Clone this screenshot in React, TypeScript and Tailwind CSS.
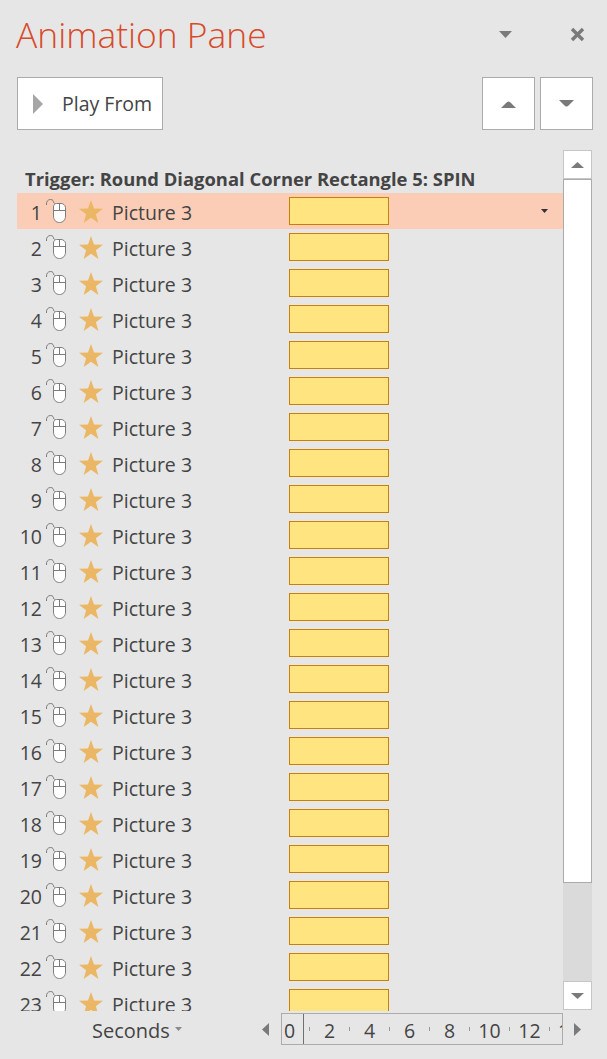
import React from 'react';

const FONT = '"Open Sans", "Noto Sans", sans-serif';

const rows = Array.from({ length: 23 }, (_, i) => i + 1);
const ticks = [2, 4, 6, 8, 10, 12];

const Tri: React.FC<{ d: string; w: number; h: number; vb: string; fill?: string }> = ({ d, w, h, vb, fill = '#7a7a7a' }) => (
  <svg width={w} height={h} viewBox={vb} className="block shrink-0">
    <path d={d} fill={fill} />
  </svg>
);

const MouseIcon: React.FC = () => (
  <svg width="22" height="24" viewBox="0 0 22 24" className="block shrink-0">
    <path d="M1.5 6 C1 2.5 3 0.5 5.5 0.5 C8 0.5 8.5 2 8.5 3.5 C9 4 10 4.5 10.5 5" fill="none" stroke="#7c7c7c" strokeWidth="1" />
    <path d="M8.5 8 C8.5 6 10 4.5 11.5 4.5 L16 4.5 C18 4.5 20.5 6 20.5 8.5 L20.5 17 C20.5 21 18 23.5 14.5 23.5 C11 23.5 8.5 21 8.5 17 Z" fill="#ffffff" stroke="#7c7c7c" strokeWidth="1" />
    <path d="M8.5 11.5 L20.5 11.5 M14.5 4.5 L14.5 11.5" fill="none" stroke="#7c7c7c" strokeWidth="1" />
  </svg>
);

const Star: React.FC = () => (
  <svg width="24" height="23" viewBox="0 0 24 23" className="block shrink-0">
    <path d="M12 0 L15 8.4 L24 8.7 L16.9 14.2 L19.4 23 L12 17.8 L4.6 23 L7.1 14.2 L0 8.7 L9 8.4 Z" fill="#ecb764" />
  </svg>
);

const Row: React.FC<{ n: number; selected: boolean }> = ({ n, selected }) => (
  <div className={`flex h-[36px] shrink-0 items-center ${selected ? 'bg-[#fccdb6]' : ''}`}>
    <span className="mt-[4px] w-[25px] shrink-0 text-right text-[19.5px] leading-none text-[#444444]">{n}</span>
    <div className="ml-[3px] -mt-[1px]">
      <MouseIcon />
    </div>
    <div className="ml-[12px]">
      <Star />
    </div>
    <span className="ml-[9px] mt-[4px] w-[177px] shrink-0 text-[19.5px] leading-none text-[#444444]">Picture 3</span>
    <div className="h-[28px] w-[100px] shrink-0 border border-[#cc8000] bg-[#ffe47f]" />
    {selected && (
      <div className="ml-[152px]">
        <Tri d="M0 0 H7 L3.5 4 Z" w={7} h={4} vb="0 0 7 4" fill="#333333" />
      </div>
    )}
  </div>
);

export default function App() {
  return (
    <div className="flex h-[1059px] w-[607px] flex-col overflow-hidden bg-[#e6e6e6]" style={{ fontFamily: FONT }}>
      {/* title */}
      <div className="mb-[8px] flex h-[69px] shrink-0 items-center pl-[16px] pr-[22px]">
        <h1 className="mt-[1px] flex-1 text-[35.4px] font-light leading-none text-[#d84a2a]">Animation Pane</h1>
        <Tri d="M0 0 H13 L6.5 7 Z" w={13} h={7} vb="0 0 13 7" />
        <svg width="15" height="15" viewBox="0 0 15 15" className="ml-[58px] block">
          <path d="M2 2 L13 13 M13 2 L2 13" stroke="#7a7a7a" strokeWidth="3.4" />
        </svg>
      </div>

      {/* toolbar */}
      <div className="flex shrink-0 items-center gap-[5px] pl-[17px] pr-[14px]">
        <button className="mr-auto flex h-[53px] w-[146px] items-center border border-[#ababab] bg-white pl-[15px]">
          <Tri d="M0 0 L10 10 L0 20 Z" w={10} h={20} vb="0 0 10 20" fill="#a6a6a6" />
          <span className="ml-[19px] text-[19.5px] leading-none text-[#444444]">Play From</span>
        </button>
        <button className="flex h-[53px] w-[53px] items-center justify-center border border-[#ababab] bg-white">
          <Tri d="M0 8 L5 3 Q7.5 0 10 3 L15 8 Z" w={15} h={8} vb="0 0 15 8" />
        </button>
        <button className="flex h-[53px] w-[53px] items-center justify-center border border-[#ababab] bg-white">
          <Tri d="M0 0 H15 L10 5 Q7.5 8 5 5 Z" w={15} h={8} vb="0 0 15 8" />
        </button>
      </div>

      {/* list + scrollbar */}
      <div className="mt-[20px] flex h-[863px] shrink-0 pl-[17px]">
        <div className="h-[861px] w-[546px] shrink-0 overflow-hidden">
          <div className="flex h-[43px] items-end pb-[5px] pl-[8px] text-[18.4px] font-bold leading-none text-[#444444]">
            Trigger: Round Diagonal Corner Rectangle 5: SPIN
          </div>
          {rows.map((n) => (
            <Row key={n} n={n} selected={n === 1} />
          ))}
        </div>
        <div className="flex h-[860px] w-[29px] shrink-0 flex-col bg-[#dadada]">
          <div className="flex h-[29px] shrink-0 items-center justify-center border border-[#c6c6c6] bg-white">
            <Tri d="M0 6 L6.5 0 L13 6 Z" w={13} h={6} vb="0 0 13 6" />
          </div>
          <div className="h-[704px] shrink-0 border border-[#ababab] bg-white" />
          <div className="flex-1" />
          <div className="flex h-[29px] shrink-0 items-center justify-center border border-[#c6c6c6] bg-white">
            <Tri d="M0 0 H13 L6.5 6 Z" w={13} h={6} vb="0 0 13 6" />
          </div>
        </div>
      </div>

      {/* time ruler */}
      <div className="relative flex h-[32px] shrink-0 items-center">
        <div className="ml-[92px] flex w-[170px] items-center">
          <span className="mt-[4px] text-[20px] leading-none text-[#444444]">Seconds</span>
          <div className="ml-[5px]">
            <Tri d="M0 0 H7 L3.5 4 Z" w={7} h={4} vb="0 0 7 4" fill="#8a8a8a" />
          </div>
        </div>
        <Tri d="M7 0 V13 L0 6.5 Z" w={7} h={13} vb="0 0 7 13" />
        <div className="ml-[12px] flex h-[32px] w-[282px] shrink-0 items-center overflow-hidden border border-[#ababab]">
          <span className="-ml-px -my-px flex h-[32px] w-[23px] shrink-0 items-center border border-[#707070] pl-[2px] pt-[3px] text-[19.5px] leading-none text-[#444444]">
            0
          </span>
          <span className="ml-[5px] h-[4px] w-px shrink-0 bg-[#9a9a9a]" />
          {ticks.map((t) => (
            <React.Fragment key={t}>
              <span className="mt-[4px] w-[39px] shrink-0 text-center text-[19.5px] leading-none text-[#444444]">{t}</span>
              <span className="h-[4px] w-px shrink-0 bg-[#9a9a9a]" />
            </React.Fragment>
          ))}
          <span className="ml-[8px] mt-[4px] shrink-0 text-[19.5px] leading-none text-[#444444]">14</span>
        </div>
        <div className="ml-[11px]">
          <Tri d="M0 0 V13 L7 6.5 Z" w={7} h={13} vb="0 0 7 13" />
        </div>
      </div>
    </div>
  );
}
